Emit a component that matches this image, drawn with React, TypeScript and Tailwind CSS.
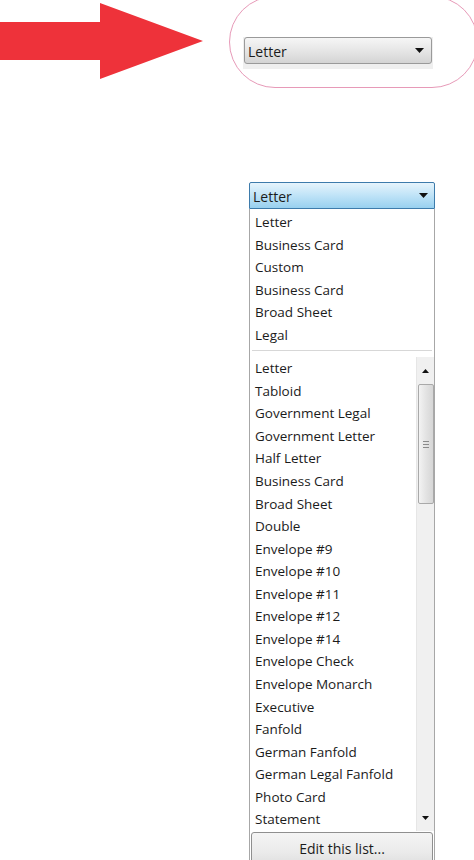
import * as React from 'react';

const firstList = ['Letter', 'Business Card', 'Custom', 'Business Card', 'Broad Sheet', 'Legal'];

const secondList = [
  'Letter',
  'Tabloid',
  'Government Legal',
  'Government Letter',
  'Half Letter',
  'Business Card',
  'Broad Sheet',
  'Double',
  'Envelope #9',
  'Envelope #10',
  'Envelope #11',
  'Envelope #12',
  'Envelope #14',
  'Envelope Check',
  'Envelope Monarch',
  'Executive',
  'Fanfold',
  'German Fanfold',
  'German Legal Fanfold',
  'Photo Card',
  'Statement',
];

// 下拉小三角
const Caret: React.FC<{ up?: boolean; className?: string }> = ({ up = false, className }) => (
  <svg width="9" height="5" viewBox="0 0 9 5" className={className}>
    <polygon points={up ? '0,5 9,5 4.5,0' : '0,0 9,0 4.5,5'} fill="#111" />
  </svg>
);

const Item: React.FC<{ label: string }> = ({ label }) => (
  <div className="h-[22.55px] flex items-center pl-[5px] pt-[1px] text-[13.5px] text-[#1b1b1b] leading-none whitespace-nowrap">
    {label}
  </div>
);

export default function App() {
  return (
    <div
      className="w-[474px] h-[860px] overflow-hidden bg-white"
      style={{ fontFamily: '"Open Sans", "Noto Sans", sans-serif' }}
    >
      {/* 顶部：箭头 + 圈起来的下拉框 */}
      <div className="flex h-[88px]">
        <svg width="205" height="82" viewBox="0 0 205 82" className="shrink-0">
          <polygon points="0,22 100,22 100,3 203,41 100,79 100,60 0,60" fill="#ee323a" />
        </svg>
        <div className="ml-[24px] -mt-[4px] w-[249px] h-[92px] shrink-0 rounded-full border border-[#e79ab8] pt-[40px] pl-[13px]">
          <div className="w-[190px] bg-[#efefef] px-[1px] pb-[5px]">
            <div className="h-[27px] w-[188px] rounded-[3px] border border-[#9a9a9a] bg-gradient-to-b from-[#f6f6f6] via-[#e6e6e6] to-[#d4d4d4] flex items-center justify-between pl-[3px] pr-[7px]">
              <span className="text-[14px] text-[#1b1b1b] pt-[1px]">Letter</span>
              <Caret />
            </div>
          </div>
        </div>
      </div>

      {/* 展开的下拉列表 */}
      <div className="ml-[249px] mt-[94px] w-[186px]">
        <div className="h-[27px] rounded-t-[2px] border border-[#3d7bab] bg-gradient-to-b from-[#e6f4fc] via-[#bfe3f7] to-[#98d0ef] flex items-center justify-between pl-[3px] pr-[6px]">
          <span className="text-[14px] text-[#1b1b1b] pt-[1px]">Letter</span>
          <Caret />
        </div>
        <div className="border-x border-[#a7a7a7] bg-white h-[700px]">
          <div className="pt-[2px]">
            {firstList.map((l, i) => (
              <Item key={i} label={l} />
            ))}
          </div>
          <div className="mt-[4px] mx-[2px] border-t border-[#d7d7d7]" />
          <div className="pt-[6px] flex">
            <div className="flex-1">
              {secondList.map((l, i) => (
                <Item key={i} label={l} />
              ))}
            </div>
            <div className="w-[18px] h-[474px] bg-[#f0f0f0] border-l border-[#e6e6e6] flex flex-col items-center">
              <div className="h-[27px] flex items-center justify-center">
                <Caret up className="w-[7px] h-[4px]" />
              </div>
              <div className="w-[16px] h-[120px] rounded-[2px] border border-[#a9a9a9] bg-gradient-to-r from-[#f3f3f3] via-[#e3e3e3] to-[#d6d6d6] flex flex-col items-center justify-center gap-[2px]">
                <div className="w-[6px] h-px bg-[#8a8a8a]" />
                <div className="w-[6px] h-px bg-[#8a8a8a]" />
                <div className="w-[6px] h-px bg-[#8a8a8a]" />
              </div>
              <div className="flex-1" />
              <div className="h-[27px] flex items-center justify-center">
                <Caret className="w-[7px] h-[4px]" />
              </div>
            </div>
          </div>
          <div className="mt-[1px] ml-[1px] w-[182px] h-[40px] rounded-[3px] border border-[#8f8f8f] bg-gradient-to-b from-[#f4f4f4] via-[#ebebeb] to-[#d9d9d9] flex justify-center pt-[5px]">
            <span className="text-[14px] text-[#1b1b1b]">Edit this list...</span>
          </div>
        </div>
      </div>
    </div>
  );
}
